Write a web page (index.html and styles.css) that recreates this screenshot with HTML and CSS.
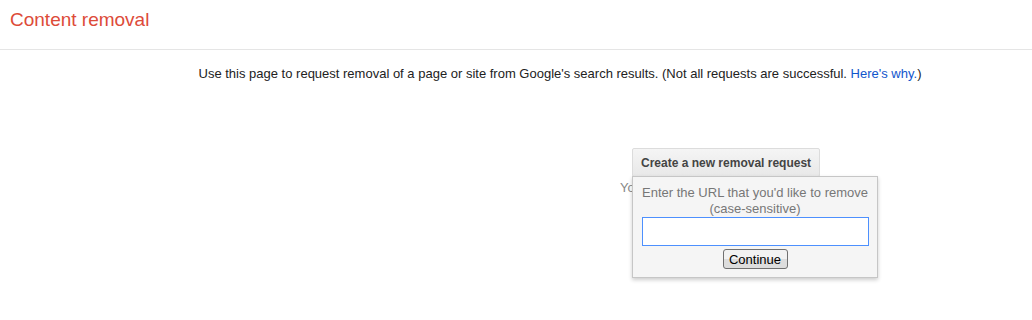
FILE: index.html
```html
<!DOCTYPE html>
<html lang="en">
<head>
    <meta charset="UTF-8">
    <title>Content removal</title>
    <link rel="stylesheet" href="styles.css">
</head>
<body>
    <header class="top-bar">
        <h1 class="page-title">Content removal</h1>
    </header>

    <main class="content">
        <p class="intro">
            Use this page to request removal of a page or site from Google's search results. (Not all requests are successful. <a href="#">Here's why.</a>)
        </p>

        <div class="requests">
            <div class="request-menu">
                <button class="create-btn">Create a new removal request</button>
                <!-- Dropdown shown under the button -->
                <div class="url-popup">
                    <p class="url-label">Enter the URL that you'd like to remove (case-sensitive)</p>
                    <input type="text" class="url-input">
                    <button class="continue-btn">Continue</button>
                </div>
            </div>
            <p class="no-requests">You have no pending removal requests.</p>
        </div>
    </main>
</body>
</html>
```

FILE: styles.css
```css
html {
    height: 100%;
}

body {
    font-family: Arial, 'Liberation Sans', sans-serif;
    font-size: 13px;
    margin: 0;
    padding: 0;
    min-height: 100%;
    background: #fff;
    color: #222;
}

.top-bar {
    height: 49px;
    border-bottom: 1px solid #e5e5e5;
    padding: 0 10px;
}

.page-title {
    margin: 0;
    padding-top: 8px;
    font-size: 19px;
    font-weight: normal;
    line-height: 24px;
    color: #dd4b39;
}

.content {
    margin-left: 88px;
    padding-bottom: 120px;
}

.intro {
    margin: 16px 0 0;
    line-height: 15px;
    text-align: center;
}

.intro a {
    color: #15c;
    text-decoration: none;
}

.requests {
    display: flex;
    flex-direction: column;
    align-items: flex-start;
    margin-top: 67px;
    padding-left: 532px;
}

.request-menu {
    position: relative;
    margin-left: 12px;
}

.create-btn {
    height: 29px;
    padding: 0 8px;
    border: 1px solid #dcdcdc;
    border-radius: 2px;
    background: linear-gradient(#f5f5f5, #e8e8e8);
    font-family: Arial, 'Liberation Sans', sans-serif;
    font-size: 12px;
    font-weight: bold;
    color: #444;
    cursor: pointer;
}

.url-popup {
    position: absolute;
    top: 28px;
    left: 0;
    width: 244px;
    padding: 8px 0 8px;
    border: 1px solid #c6c6c6;
    background: #f5f5f5;
    box-shadow: 0 2px 4px rgba(0, 0, 0, 0.2);
    text-align: center;
    z-index: 2;
}

.url-label {
    margin: 0 8px;
    line-height: 16px;
    color: #777;
}

.url-input {
    display: block;
    width: 227px;
    height: 29px;
    margin: 0 0 0 9px;
    padding: 0 4px;
    box-sizing: border-box;
    border: 1px solid #4d90fe;
    border-radius: 0;
    background: #fff;
    outline: none;
}

.continue-btn {
    width: 65px;
    height: 20px;
    margin-top: 3px;
    padding: 0;
    border: 1px solid #707070;
    border-radius: 3px;
    background: linear-gradient(#f2f2f2 50%, #dddddd 50%);
    font-family: Arial, 'Liberation Sans', sans-serif;
    font-size: 13px;
    color: #000;
}

.no-requests {
    margin: 3px 0 0;
    line-height: 16px;
    color: #888;
}
```
